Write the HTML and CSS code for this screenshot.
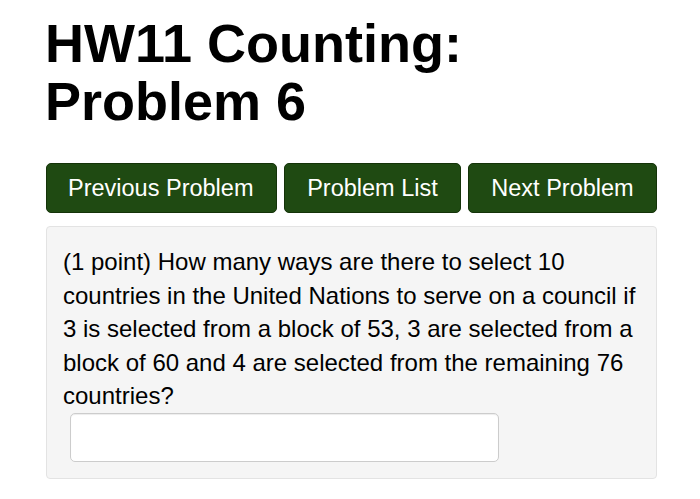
FILE: index.html
```
<!DOCTYPE html>
<html>
<head>
<meta charset="utf-8">
<link rel="stylesheet" href="styles.css">
</head>
<body>
<div class="page">
  <h1 class="title">HW11 Counting:<br>Problem 6</h1>
  <div class="nav">
    <a class="btn btn-prev">Previous Problem</a>
    <a class="btn btn-list">Problem List</a>
    <a class="btn btn-next">Next Problem</a>
  </div>
  <div class="problem">
    <p class="question">(1 point) How many ways are there to select 10 countries in the United Nations to serve on a council if 3 is selected from a block of 53, 3 are selected from a block of 60 and 4 are selected from the remaining 76 countries?</p>
    <div class="answer"><input class="answer-input" type="text"></div>
  </div>
</div>
</body>
</html>
```
FILE: styles.css
```
html, body {
  margin: 0;
  padding: 0;
  background: #ffffff;
}
.page {
  font-family: "Liberation Sans", Arial, sans-serif;
  color: #000;
  padding: 14px 43px 0 46px;
}
.title {
  font-size: 54px;
  font-weight: bold;
  line-height: 58px;
  margin: 0 0 0 -1px;
  letter-spacing: 0;
}
.nav {
  display: flex;
  gap: 7px;
  margin-top: 33px;
}
.btn {
  display: block;
  height: 50px;
  box-sizing: border-box;
  padding: 0 21px;
  line-height: 48px;
  font-size: 23.5px;
  color: #fff;
  background: #1f4a12;
  border: 1px solid #143309;
  border-radius: 5px;
  white-space: nowrap;
}
.btn-prev { width: 231px; }
.btn-list { width: 177px; text-align: center; padding: 0; }
.btn-next { width: 189px; text-align: center; padding: 0; }
.problem {
  margin-top: 13px;
  width: 611px;
  box-sizing: border-box;
  background: #f5f5f5;
  border: 1px solid #e3e3e3;
  border-radius: 4px;
  padding: 18px 16px 16px 16px;
  height: 253px;
}
.question {
  margin: 0;
  font-size: 24px;
  line-height: 33.6px;
}
.answer {
  padding-left: 7px;
}
.answer-input {
  display: block;
  width: 429px;
  height: 49px;
  box-sizing: border-box;
  border: 1px solid #cccccc;
  border-radius: 5px;
  background: #fff;
  box-shadow: inset 0 1px 1px rgba(0,0,0,0.075);
  margin: 0;
  padding: 0;
}
```
